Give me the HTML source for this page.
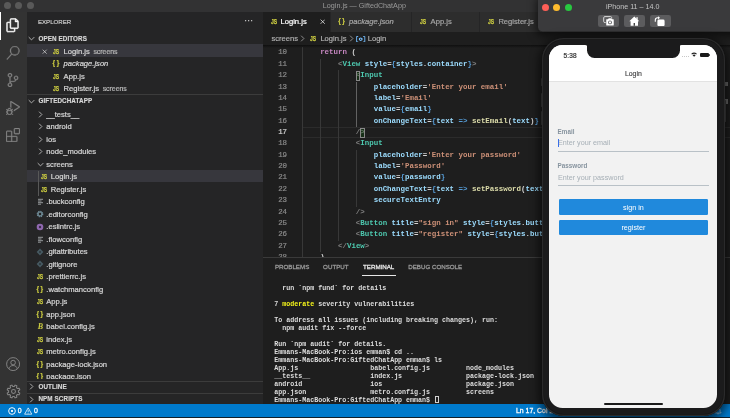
<!DOCTYPE html>
<html><head><meta charset="utf-8">
<style>
*{box-sizing:border-box;margin:0;padding:0}
html,body{width:730px;height:418px;overflow:hidden;background:#1e1e1e}
body{position:relative;font-family:"Liberation Sans",sans-serif;color:#ccc;-webkit-font-smoothing:antialiased}
.abs{position:absolute}
.t{position:absolute;white-space:pre;line-height:1}
#title{left:0;top:0;width:730px;height:12px;background:#323233}
.tl{position:absolute;top:2.3px;width:7.2px;height:7.2px;border-radius:50%;background:#595959}
#act{left:0;top:12px;width:27px;height:393px;background:#333333}
#side{left:27px;top:12px;width:236px;height:393px;background:#252526}
#status{left:0;top:404.2px;width:730px;height:12.6px;background:#007acc}
#bottom{left:0;top:416.8px;width:730px;height:1.2px;background:#10202c}
#tabs{left:263px;top:12px;width:467px;height:20px;background:#252526}
.tab{position:absolute;top:0;height:20px;background:#2d2d2d}
#ed{left:263px;top:32px;width:467px;height:225px;background:#1e1e1e}
#panel{left:263px;top:256.6px;width:467px;height:148px;background:#1e1e1e;border-top:1px solid #3a3a3a}
.row{position:absolute;left:0;width:236px;height:12.5px}
.lbl{position:absolute;top:0;font-size:7.6px;line-height:12.5px;color:#d4d4d4;white-space:pre;-webkit-text-stroke:0.22px #d4d4d4}
.hdr{position:absolute;font-size:6.3px;font-weight:bold;color:#d8d8d8;-webkit-text-stroke:0.15px #d8d8d8;line-height:12.5px;white-space:pre;letter-spacing:0.1px}
.ic{position:absolute;font-weight:bold;font-size:5.6px;line-height:12.5px;color:#cbcb41;letter-spacing:-0.3px}
.code{position:absolute;left:302.3px;font-family:"Liberation Mono",monospace;font-size:7.45px;line-height:11.37px;white-space:pre;color:#d4d4d4;font-weight:bold}
.ln{position:absolute;left:263px;width:24.1px;text-align:right;font-family:"Liberation Mono",monospace;font-size:7.45px;line-height:11.37px;color:#8a8a8a;white-space:pre;-webkit-text-stroke:0.2px #8a8a8a}
.term{position:absolute;left:274.3px;font-family:"Liberation Mono",monospace;font-size:6.66px;line-height:8px;white-space:pre;color:#dedede;font-weight:bold}
.k{color:#c586c0}.g{color:#808080}.tg{color:#4ec9b0}.at{color:#9cdcfe}.b{color:#569cd6}.s{color:#ce9178}.f{color:#dcdcaa}
</style></head><body>
<div id="wrap" style="position:absolute;left:0;top:0;width:730px;height:418px;will-change:transform;overflow:hidden">
<!-- TITLE BAR -->
<div id="title" class="abs">
 <div class="tl" style="left:3.7px"></div><div class="tl" style="left:15px"></div><div class="tl" style="left:26.5px"></div>
 <div class="t" style="left:322.8px;top:2.2px;font-size:7.2px;color:#9a9a9a">Login.js — GiftedChatApp</div>
</div>
<!-- ACTIVITY BAR -->
<div id="act" class="abs">
 <div class="abs" style="left:0;top:0;width:1.3px;height:27.5px;background:#fff"></div>
 <svg class="abs" style="left:6.2px;top:6.4px" width="13.6" height="14.6" viewBox="0 0 24 24"><path fill="#ffffff" stroke="#ffffff" stroke-width="0.9" d="M17.5 0h-9L7 1.5V6H2.500L1 7.500v15.070L2.500 24h12.070L16 22.570V18h4.700l1.300-1.430V4.500L17.500 0zm0 2.120l2.380 2.380H17.500V2.120zm-3 20.380h-12v-15H7v9.070L8.500 18h6v4.500zm6-6h-12v-15H16V6h4.500v10.500z"/></svg>
 <svg class="abs" style="left:6.4px;top:34.2px" width="13.8" height="13.8" viewBox="0 0 24 24"><path fill="#858585" stroke="#858585" stroke-width="0.5" d="M15.250 0a8.250 8.250 0 0 0-6.180 13.720L1 22.880l1.120 1 8.050-9.120A8.251 8.251 0 1 0 15.250.010V0zm0 15a6.750 6.750 0 1 1 0-13.500 6.750 6.750 0 0 1 0 13.500z"/></svg>
 <svg class="abs" style="left:6.4px;top:61.2px" width="14" height="14.2" viewBox="0 0 24 24"><path fill="#858585" stroke="#858585" stroke-width="0.5" d="M21.007 8.222A3.738 3.738 0 0 0 15.045 5.200a3.737 3.737 0 0 0 1.156 6.583 2.988 2.988 0 0 1-2.668 1.670h-2.990a4.456 4.456 0 0 0-2.989 1.165V7.400a3.737 3.737 0 1 0-1.494 0v9.117a3.776 3.776 0 1 0 1.816.099 2.990 2.990 0 0 1 2.668-1.667h2.990a4.484 4.484 0 0 0 4.223-3.039 3.736 3.736 0 0 0 3.250-3.687zM4.565 3.738a2.242 2.242 0 1 1 4.484 0 2.242 2.242 0 0 1-4.484 0zm4.484 16.441a2.242 2.242 0 1 1-4.484 0 2.242 2.242 0 0 1 4.484 0zm8.221-9.715a2.242 2.242 0 1 1 0-4.485 2.242 2.242 0 0 1 0 4.485z"/></svg>
 <svg class="abs" style="left:6.2px;top:88.5px" width="14" height="14" viewBox="0 0 24 24"><path fill="#858585" stroke="#858585" stroke-width="0.5" d="M10.940 13.500l-1.320 1.320a3.730 3.730 0 0 0-7.240 0L1.060 13.500 0 14.560l1.720 1.720-.220.220V18H0v1.500h1.500v.080c.077.489.214.966.410 1.420L0 22.940 1.060 24l1.650-1.650A4.308 4.308 0 0 0 6 24a4.310 4.310 0 0 0 3.290-1.650L10.940 24 12 22.940 10.090 21c.198-.464.336-.951.410-1.450v-.100H12V18h-1.500v-1.500l-.220-.220L12 14.560l-1.060-1.060zM6 13.500a2.250 2.250 0 0 1 2.250 2.250h-4.500A2.250 2.250 0 0 1 6 13.500zm3 6a3.330 3.330 0 0 1-3 3 3.330 3.330 0 0 1-3-3v-2.250h6v2.250zm14.760-9.900v1.260L13.500 17.370V15.600l8.500-5.370L9 2v9.460a5.070 5.070 0 0 0-1.500-.720V.630L8.640 0l15.120 9.600z"/></svg>
 <svg class="abs" style="left:6.2px;top:115.8px" width="14" height="14" viewBox="0 0 24 24"><path fill="#858585" stroke="#858585" stroke-width="0.5" d="M13.500 1.500L15 0h7.500L24 1.500V9l-1.500 1.500H15L13.500 9V1.500zm1.500 0V9h7.500V1.500H15zM0 15V6l1.500-1.500H9L10.500 6v7.500H18l1.500 1.500v7.500L18 24H1.500L0 22.500V15zm9-1.500V6H1.500v7.500H9zM9 15H1.500v7.500H9V15zm1.500 7.500H18V15h-7.500v7.500z"/></svg>
 <svg class="abs" style="left:5.9px;top:344.6px" width="14.2" height="14.2" viewBox="0 0 16 16"><circle cx="8" cy="8" r="7.3" fill="none" stroke="#858585" stroke-width="1.1"/><circle cx="8" cy="6.3" r="2.6" fill="none" stroke="#858585" stroke-width="1.1"/><path d="M3.400 13.300c.3-2.300 2.200-3.700 4.600-3.700s4.300 1.400 4.600 3.700" fill="none" stroke="#858585" stroke-width="1.100"/></svg>
 <svg class="abs" style="left:5.500px;top:371.700px" width="15" height="15" viewBox="0 0 16 16"><path d="M13.14 6.69 L14.93 7.02 L14.93 8.98 L13.14 9.31 L12.56 10.70 L13.59 12.21 L12.21 13.59 L10.70 12.56 L9.31 13.14 L8.98 14.93 L7.02 14.93 L6.69 13.14 L5.30 12.56 L3.79 13.59 L2.41 12.21 L3.44 10.70 L2.86 9.31 L1.07 8.98 L1.07 7.02 L2.86 6.69 L3.44 5.30 L2.41 3.79 L3.79 2.41 L5.30 3.44 L6.69 2.86 L7.02 1.07 L8.98 1.07 L9.31 2.86 L10.70 3.44 L12.21 2.41 L13.59 3.79 L12.56 5.30Z" fill="none" stroke="#858585" stroke-width="1.100" stroke-linejoin="round" transform="rotate(22.5 8 8)"/><circle cx="8" cy="8" r="2.100" fill="none" stroke="#858585" stroke-width="1.100"/></svg>
</div>
<!-- SIDEBAR -->
<div id="side" class="abs">
<div class="t" style="left:11px;top:7.300px;font-size:6.050px;color:#c8c8c8;letter-spacing:0.020px;-webkit-text-stroke:0.180px #c8c8c8">EXPLORER</div>
<div class="t" style="left:217.500px;top:5.200px;font-size:8px;color:#c5c5c5;letter-spacing:0.300px;font-weight:bold">···</div>
<div class="row" style="top:20.70px;"><svg class="abs" style="left:1.10px;top:3.35px" width="7" height="5" viewBox="0 0 7 5"><path d="M0.700 1.100L3.500 3.900L6.300 1.100" fill="none" stroke="#c5c5c5" stroke-width="0.850"/></svg><div class="hdr" style="left:11.400px;top:0px">OPEN EDITORS</div></div>
<div class="row" style="top:33.25px"><div class="abs" style="left:0;top:-1.200px;width:236px;height:12.700px;background:#37373d"></div><svg class="abs" style="left:15.200px;top:3.700px" width="5.400" height="5.400" viewBox="0 0 5.400 5.400"><path d="M0.700 0.700L4.700 4.700M4.700 0.700L0.700 4.700" stroke="#d0d0d0" stroke-width="0.750"/></svg><div class="ic" style="left:25.60px;top:0.70px;font-size:7.2px;letter-spacing:0;transform:scaleX(0.7);transform-origin:0 50%;-webkit-text-stroke:0.25px #cbcb41">JS</div><div class="lbl" style="left:36.600px;top:0.300px;">Login.js<span style="font-size:6.900px;color:#9a9a9a;margin-left:3.600px">screens</span></div></div>
<div class="row" style="top:45.75px"><div class="ic" style="left:25.60px;top:-0.45px;font-size:6.6px;letter-spacing:1.5px;-webkit-text-stroke:0.2px #cbcb41">{}</div><div class="lbl" style="left:36.600px;top:0.300px;font-style:italic;">package.json</div></div>
<div class="row" style="top:58.25px"><div class="ic" style="left:25.60px;top:0.70px;font-size:7.2px;letter-spacing:0;transform:scaleX(0.7);transform-origin:0 50%;-webkit-text-stroke:0.25px #cbcb41">JS</div><div class="lbl" style="left:36.600px;top:0.300px;">App.js</div></div>
<div class="row" style="top:70.75px"><div class="ic" style="left:25.60px;top:0.70px;font-size:7.2px;letter-spacing:0;transform:scaleX(0.7);transform-origin:0 50%;-webkit-text-stroke:0.25px #cbcb41">JS</div><div class="lbl" style="left:36.600px;top:0.300px;">Register.js<span style="font-size:6.900px;color:#9a9a9a;margin-left:3.600px">screens</span></div></div>
<div class="row" style="top:81.60px;border-top:1px solid #3c3c3c;"><svg class="abs" style="left:1.10px;top:4.15px" width="7" height="5" viewBox="0 0 7 5"><path d="M0.700 1.100L3.500 3.900L6.300 1.100" fill="none" stroke="#c5c5c5" stroke-width="0.850"/></svg><div class="hdr" style="left:11.400px;top:0.8px">GIFTEDCHATAPP</div></div>
<div class="abs" style="left:0;top:96px;width:236px;height:270.800px;overflow:hidden">
<div class="row" style="top:0.00px"><svg class="abs" style="left:11.00px;top:2.75px" width="5" height="7" viewBox="0 0 5 7"><path d="M1.100 0.700L3.900 3.500L1.100 6.300" fill="none" stroke="#c5c5c5" stroke-width="0.850"/></svg><div class="lbl" style="left:19.30px;top:0.500px">__tests__</div></div>
<div class="row" style="top:12.50px"><svg class="abs" style="left:11.00px;top:2.75px" width="5" height="7" viewBox="0 0 5 7"><path d="M1.100 0.700L3.900 3.500L1.100 6.300" fill="none" stroke="#c5c5c5" stroke-width="0.850"/></svg><div class="lbl" style="left:19.30px;top:0.500px">android</div></div>
<div class="row" style="top:25.00px"><svg class="abs" style="left:11.00px;top:2.75px" width="5" height="7" viewBox="0 0 5 7"><path d="M1.100 0.700L3.900 3.500L1.100 6.300" fill="none" stroke="#c5c5c5" stroke-width="0.850"/></svg><div class="lbl" style="left:19.30px;top:0.500px">ios</div></div>
<div class="row" style="top:37.50px"><svg class="abs" style="left:11.00px;top:2.75px" width="5" height="7" viewBox="0 0 5 7"><path d="M1.100 0.700L3.900 3.500L1.100 6.300" fill="none" stroke="#c5c5c5" stroke-width="0.850"/></svg><div class="lbl" style="left:19.30px;top:0.500px">node_modules</div></div>
<div class="row" style="top:50.00px"><svg class="abs" style="left:9.80px;top:3.60px" width="7" height="5" viewBox="0 0 7 5"><path d="M0.700 1.100L3.500 3.900L6.300 1.100" fill="none" stroke="#c5c5c5" stroke-width="0.850"/></svg><div class="lbl" style="left:19.30px;top:0.500px">screens</div></div>
<div class="row" style="top:62.50px"><div class="abs" style="left:0;top:-0.800px;width:236px;height:12.500px;background:#37373d"></div><div class="abs" style="left:11.100px;top:0;width:0.600px;height:12.500px;background:#585858"></div><div class="ic" style="left:14.00px;top:0.70px;font-size:7.2px;letter-spacing:0;transform:scaleX(0.7);transform-origin:0 50%;-webkit-text-stroke:0.25px #cbcb41">JS</div><div class="lbl" style="left:23.80px;top:0.500px">Login.js</div></div>
<div class="row" style="top:75.00px"><div class="abs" style="left:11.100px;top:0;width:0.600px;height:12.500px;background:#585858"></div><div class="ic" style="left:14.00px;top:0.70px;font-size:7.2px;letter-spacing:0;transform:scaleX(0.7);transform-origin:0 50%;-webkit-text-stroke:0.25px #cbcb41">JS</div><div class="lbl" style="left:23.80px;top:0.500px">Register.js</div></div>
<div class="row" style="top:87.50px"><svg class="abs" style="left:9.80px;top:2.75px" width="7" height="7" viewBox="0 0 7 7"><path d="M1 1.300h5M1 3h3.500M1 4.700h5M1 6.200h3" stroke="#a0a5a8" stroke-width="0.9" fill="none"/></svg><div class="lbl" style="left:19.30px;top:0.500px">.buckconfig</div></div>
<div class="row" style="top:100.00px"><svg class="abs" style="left:9.30px;top:2.25px" width="8" height="8" viewBox="0 0 8 8"><circle cx="4" cy="4" r="2.500" fill="none" stroke="#6f8b97" stroke-width="1.700" stroke-dasharray="1.200 0.760"/><circle cx="4" cy="4" r="2" fill="none" stroke="#6f8b97" stroke-width="1.200"/></svg><div class="lbl" style="left:19.30px;top:0.500px">.editorconfig</div></div>
<div class="row" style="top:112.50px"><svg class="abs" style="left:9.30px;top:2.25px" width="8" height="8" viewBox="0 0 8 8"><circle cx="4" cy="4" r="3.300" fill="#9068b0"/><circle cx="4" cy="4" r="1.200" fill="#3a2d4a"/></svg><div class="lbl" style="left:19.30px;top:0.500px">.eslintrc.js</div></div>
<div class="row" style="top:125.00px"><svg class="abs" style="left:9.80px;top:2.75px" width="7" height="7" viewBox="0 0 7 7"><path d="M1 1.300h5M1 3h3.500M1 4.700h5M1 6.200h3" stroke="#a0a5a8" stroke-width="0.9" fill="none"/></svg><div class="lbl" style="left:19.30px;top:0.500px">.flowconfig</div></div>
<div class="row" style="top:137.50px"><svg class="abs" style="left:9.30px;top:2.25px" width="8" height="8" viewBox="0 0 8 8"><path d="M4 0.600L7.400 4L4 7.400L0.600 4Z" fill="#465961"/><circle cx="4" cy="4" r="0.9" fill="#2a3237"/></svg><div class="lbl" style="left:19.30px;top:0.500px">.gitattributes</div></div>
<div class="row" style="top:150.00px"><svg class="abs" style="left:9.30px;top:2.25px" width="8" height="8" viewBox="0 0 8 8"><path d="M4 0.600L7.400 4L4 7.400L0.600 4Z" fill="#465961"/><circle cx="4" cy="4" r="0.9" fill="#2a3237"/></svg><div class="lbl" style="left:19.30px;top:0.500px">.gitignore</div></div>
<div class="row" style="top:162.50px"><div class="ic" style="left:9.50px;top:0.70px;font-size:7.2px;letter-spacing:0;transform:scaleX(0.7);transform-origin:0 50%;-webkit-text-stroke:0.25px #cbcb41">JS</div><div class="lbl" style="left:19.30px;top:0.500px">.prettierrc.js</div></div>
<div class="row" style="top:175.00px"><div class="ic" style="left:9.50px;top:-0.45px;font-size:6.6px;letter-spacing:1.5px;-webkit-text-stroke:0.2px #cbcb41">{}</div><div class="lbl" style="left:19.30px;top:0.500px">.watchmanconfig</div></div>
<div class="row" style="top:187.50px"><div class="ic" style="left:9.50px;top:0.70px;font-size:7.2px;letter-spacing:0;transform:scaleX(0.7);transform-origin:0 50%;-webkit-text-stroke:0.25px #cbcb41">JS</div><div class="lbl" style="left:19.30px;top:0.500px">App.js</div></div>
<div class="row" style="top:200.00px"><div class="ic" style="left:9.50px;top:-0.45px;font-size:6.6px;letter-spacing:1.5px;-webkit-text-stroke:0.2px #cbcb41">{}</div><div class="lbl" style="left:19.30px;top:0.500px">app.json</div></div>
<div class="row" style="top:212.50px"><div class="ic" style="left:10.70px;top:0.00px;font-size:8px;font-style:italic;font-weight:bold;font-family:'Liberation Serif',serif;letter-spacing:0">B</div><div class="lbl" style="left:19.30px;top:0.500px">babel.config.js</div></div>
<div class="row" style="top:225.00px"><div class="ic" style="left:9.50px;top:0.70px;font-size:7.2px;letter-spacing:0;transform:scaleX(0.7);transform-origin:0 50%;-webkit-text-stroke:0.25px #cbcb41">JS</div><div class="lbl" style="left:19.30px;top:0.500px">index.js</div></div>
<div class="row" style="top:237.50px"><div class="ic" style="left:9.50px;top:0.70px;font-size:7.2px;letter-spacing:0;transform:scaleX(0.7);transform-origin:0 50%;-webkit-text-stroke:0.25px #cbcb41">JS</div><div class="lbl" style="left:19.30px;top:0.500px">metro.config.js</div></div>
<div class="row" style="top:250.00px"><div class="ic" style="left:9.50px;top:-0.45px;font-size:6.6px;letter-spacing:1.5px;-webkit-text-stroke:0.2px #cbcb41">{}</div><div class="lbl" style="left:19.30px;top:0.500px">package-lock.json</div></div>
<div class="row" style="top:262.50px"><div class="ic" style="left:9.50px;top:-0.45px;font-size:6.6px;letter-spacing:1.5px;-webkit-text-stroke:0.2px #cbcb41">{}</div><div class="lbl" style="left:19.30px;top:0.500px">package.json</div></div>
</div>
<div class="row" style="top:369px;border-top:1px solid #3c3c3c;background:#252526"><svg class="abs" style="left:2.40px;top:1.10px" width="5" height="7" viewBox="0 0 5 7"><path d="M1.100 0.700L3.900 3.500L1.100 6.300" fill="none" stroke="#c5c5c5" stroke-width="0.850"/></svg><div class="hdr" style="left:11.400px;top:-1.500px">OUTLINE</div></div>
<div class="row" style="top:381.200px;border-top:1px solid #3c3c3c;background:#252526;height:12.700px"><svg class="abs" style="left:2.40px;top:1.40px" width="5" height="7" viewBox="0 0 5 7"><path d="M1.100 0.700L3.900 3.500L1.100 6.300" fill="none" stroke="#c5c5c5" stroke-width="0.850"/></svg><div class="hdr" style="left:11.400px;top:-1.300px">NPM SCRIPTS</div></div>
</div>
<!-- TABS -->
<div id="tabs" class="abs">
<div class="tab" style="left:0px;width:67.7px;background:#1e1e1e;border-right:0.600px solid #252526"><div class="ic" style="left:7.50px;top:4.35px;font-size:7.2px;letter-spacing:0;transform:scaleX(0.7);transform-origin:0 50%;-webkit-text-stroke:0.25px #cbcb41">JS</div><div class="t" style="left:17.50px;top:6.00px;font-size:7.600px;color:#ffffff;-webkit-text-stroke:0.200px #ffffff">Login.js</div><svg class="abs" style="left:56.80px;top:7.20px" width="5.400" height="5.400" viewBox="0 0 5.400 5.400"><path d="M0.600 0.600L4.800 4.800M4.800 0.600L0.600 4.800" stroke="#e0e0e0" stroke-width="0.800"/></svg></div>
<div class="tab" style="left:67.7px;width:81.6px;background:#2d2d2d;border-right:0.600px solid #252526"><div class="ic" style="left:7.50px;top:3.20px;font-size:6.6px;letter-spacing:1.5px;-webkit-text-stroke:0.2px #cbcb41">{}</div><div class="t" style="left:18.30px;top:6.00px;font-size:7.600px;color:#a6a6a6;font-style:italic;-webkit-text-stroke:0.200px #a6a6a6">package.json</div></div>
<div class="tab" style="left:149.3px;width:67.9px;background:#2d2d2d;border-right:0.600px solid #252526"><div class="ic" style="left:7.60px;top:4.35px;font-size:7.2px;letter-spacing:0;transform:scaleX(0.7);transform-origin:0 50%;-webkit-text-stroke:0.25px #cbcb41">JS</div><div class="t" style="left:18.30px;top:6.00px;font-size:7.600px;color:#a6a6a6;-webkit-text-stroke:0.200px #a6a6a6">App.js</div></div>
<div class="tab" style="left:217.2px;width:75px;background:#2d2d2d;border-right:0.600px solid #252526"><div class="ic" style="left:8.10px;top:4.35px;font-size:7.2px;letter-spacing:0;transform:scaleX(0.7);transform-origin:0 50%;-webkit-text-stroke:0.25px #cbcb41">JS</div><div class="t" style="left:18.20px;top:6.00px;font-size:7.600px;color:#a6a6a6;-webkit-text-stroke:0.200px #a6a6a6">Register.js</div></div>
</div>
<!-- EDITOR -->
<div id="ed" class="abs" style="overflow:hidden">
<div class="t" style="left:8.500px;top:2.90px;font-size:7.600px;color:#b4b4b4;-webkit-text-stroke:0.150px #b4b4b4">screens</div>
<svg class="abs" style="left:37.10px;top:2.80px" width="5" height="7" viewBox="0 0 5 7"><path d="M1.100 0.700L3.900 3.500L1.100 6.300" fill="none" stroke="#a0a0a0" stroke-width="0.850"/></svg>
<div class="ic" style="left:46.50px;top:1.25px;font-size:7.2px;letter-spacing:0;transform:scaleX(0.7);transform-origin:0 50%;-webkit-text-stroke:0.25px #cbcb41">JS</div>
<div class="t" style="left:57.400px;top:2.90px;font-size:7.600px;color:#b4b4b4;-webkit-text-stroke:0.150px #b4b4b4">Login.js</div>
<svg class="abs" style="left:85.90px;top:2.80px" width="5" height="7" viewBox="0 0 5 7"><path d="M1.100 0.700L3.900 3.500L1.100 6.300" fill="none" stroke="#a0a0a0" stroke-width="0.850"/></svg>
<svg class="abs" style="left:93.300px;top:3.60px" width="9.400" height="6.400" viewBox="0 0 9.400 6.400"><path d="M2.200 0.500H0.600V5.900H2.200M7.200 0.500H8.800V5.900H7.200" fill="none" stroke="#75beff" stroke-width="0.900"/><path d="M4.700 1.400L6.500 2.300V4.100L4.700 5L2.900 4.100V2.300Z" fill="#75beff"/><circle cx="4.700" cy="3.200" r="0.700" fill="#1e1e1e"/></svg>
<div class="t" style="left:104.700px;top:2.90px;font-size:7.600px;color:#b4b4b4;-webkit-text-stroke:0.150px #b4b4b4">Login</div>
</div>
<div id="code" class="abs" style="left:0;top:44.500px;width:730px;height:212.500px;overflow:hidden">
<div class="abs" style="left:302.300px;top:82.50px;width:430px;height:11.37px;border-top:1px solid #2b2b2b;border-bottom:1px solid #2b2b2b"></div>
<div class="abs" style="left:302.30px;top:2.91px;width:0.600px;height:216.03px;background:#383838"></div>
<div class="abs" style="left:320.18px;top:14.28px;width:0.600px;height:193.29px;background:#383838"></div>
<div class="abs" style="left:338.06px;top:25.66px;width:0.600px;height:170.55px;background:#383838"></div>
<div class="abs" style="left:355.94px;top:37.03px;width:0.600px;height:45.48px;background:#626262"></div>
<div class="abs" style="left:355.94px;top:105.25px;width:0.600px;height:56.85px;background:#383838"></div>
<div class="ln" style="top:2.91px;">10</div>
<div class="code" style="top:2.91px">    <span class="k">return</span> (</div>
<div class="ln" style="top:14.28px;">11</div>
<div class="code" style="top:14.28px">        <span class="g">&lt;</span><span class="tg">View</span> <span class="at">style</span>=<span class="b">{</span><span class="at">styles</span>.<span class="at">container</span><span class="b">}</span><span class="g">&gt;</span></div>
<div class="ln" style="top:25.66px;">12</div>
<div class="code" style="top:25.66px">            <span class="g">&lt;</span><span class="tg">Input</span></div>
<div class="ln" style="top:37.03px;">13</div>
<div class="code" style="top:37.03px">                <span class="at">placeholder</span>=<span class="s">'Enter your email'</span></div>
<div class="ln" style="top:48.39px;">14</div>
<div class="code" style="top:48.39px">                <span class="at">label</span>=<span class="s">'Email'</span></div>
<div class="ln" style="top:59.76px;">15</div>
<div class="code" style="top:59.76px">                <span class="at">value</span>=<span class="b">{</span><span class="at">email</span><span class="b">}</span></div>
<div class="ln" style="top:71.13px;">16</div>
<div class="code" style="top:71.13px">                <span class="at">onChangeText</span>=<span class="b">{</span><span class="at">text</span> <span class="b">=&gt;</span> <span class="f">setEmail</span>(<span class="at">text</span>)<span class="b">}</span></div>
<div class="ln" style="top:82.50px;color:#c6c6c6;font-weight:bold;">17</div>
<div class="code" style="top:82.50px">            <span class="g">/&gt;</span></div>
<div class="ln" style="top:93.88px;">18</div>
<div class="code" style="top:93.88px">            <span class="g">&lt;</span><span class="tg">Input</span></div>
<div class="ln" style="top:105.25px;">19</div>
<div class="code" style="top:105.25px">                <span class="at">placeholder</span>=<span class="s">'Enter your password'</span></div>
<div class="ln" style="top:116.61px;">20</div>
<div class="code" style="top:116.61px">                <span class="at">label</span>=<span class="s">'Password'</span></div>
<div class="ln" style="top:127.98px;">21</div>
<div class="code" style="top:127.98px">                <span class="at">value</span>=<span class="b">{</span><span class="at">password</span><span class="b">}</span></div>
<div class="ln" style="top:139.35px;">22</div>
<div class="code" style="top:139.35px">                <span class="at">onChangeText</span>=<span class="b">{</span><span class="at">text</span> <span class="b">=&gt;</span> <span class="f">setPassword</span>(<span class="at">text</span>)<span class="b">}</span></div>
<div class="ln" style="top:150.72px;">23</div>
<div class="code" style="top:150.72px">                <span class="at">secureTextEntry</span></div>
<div class="ln" style="top:162.09px;">24</div>
<div class="code" style="top:162.09px">            <span class="g">/&gt;</span></div>
<div class="ln" style="top:173.46px;">25</div>
<div class="code" style="top:173.46px">            <span class="g">&lt;</span><span class="tg">Button</span> <span class="at">title</span>=<span class="s">"sign in"</span> <span class="at">style</span>=<span class="b">{</span><span class="at">styles</span>.<span class="at">button</span><span class="b">}</span> <span class="g">/&gt;</span></div>
<div class="ln" style="top:184.83px;">26</div>
<div class="code" style="top:184.83px">            <span class="g">&lt;</span><span class="tg">Button</span> <span class="at">title</span>=<span class="s">"register"</span> <span class="at">style</span>=<span class="b">{</span><span class="at">styles</span>.<span class="at">button</span><span class="b">}</span> <span class="g">/&gt;</span></div>
<div class="ln" style="top:196.20px;">27</div>
<div class="code" style="top:196.20px">        <span class="g">&lt;/</span><span class="tg">View</span><span class="g">&gt;</span></div>
<div class="ln" style="top:207.57px;">28</div>
<div class="code" style="top:207.57px">    )</div>
<div class="abs" style="left:355.64px;top:26.86px;width:4.87px;height:9.37px;border:0.600px solid #888;background:rgba(0,110,0,0.220)"></div>
<div class="abs" style="left:360.11px;top:83.70px;width:4.87px;height:9.37px;border:0.600px solid #888;background:rgba(0,110,0,0.220)"></div>
<div class="abs" style="left:263px;top:0;width:467px;height:3.600px;background:linear-gradient(rgba(0,0,0,0.500),rgba(0,0,0,0))"></div>
</div>
<!-- PANEL -->
<div id="panel" class="abs" style="overflow:hidden">
<div class="t" style="left:11.90px;top:6.30px;font-size:6.200px;color:#999999;-webkit-text-stroke:0.280px #999999">PROBLEMS</div>
<div class="t" style="left:60.10px;top:6.30px;font-size:6.200px;color:#999999;-webkit-text-stroke:0.280px #999999">OUTPUT</div>
<div class="t" style="left:100.00px;top:6.30px;font-size:6.200px;color:#e7e7e7;-webkit-text-stroke:0.280px #e7e7e7">TERMINAL</div>
<div class="t" style="left:145.20px;top:6.30px;font-size:6.200px;color:#999999;-webkit-text-stroke:0.280px #999999">DEBUG CONSOLE</div>
<div class="abs" style="left:99px;top:17.200px;width:33.500px;height:1.300px;background:#e7e7e7"></div>
</div>
<div id="term" class="abs" style="left:0;top:280px;width:730px;height:125px;overflow:hidden">
<div class="term" style="top:4.00px">  run `npm fund` for details</div>
<div class="term" style="top:12.00px"></div>
<div class="term" style="top:20.00px">7 <span style="color:#f4f41a">moderate</span> severity vulnerabilities</div>
<div class="term" style="top:28.00px"></div>
<div class="term" style="top:36.00px">To address all issues (including breaking changes), run:</div>
<div class="term" style="top:44.00px">  npm audit fix --force</div>
<div class="term" style="top:52.00px"></div>
<div class="term" style="top:60.00px">Run `npm audit` for details.</div>
<div class="term" style="top:68.00px">Emmans-MacBook-Pro:ios emman$ cd ..</div>
<div class="term" style="top:76.00px">Emmans-MacBook-Pro:GiftedChatApp emman$ ls</div>
<div class="term" style="top:84.00px">App.js                  babel.config.js         node_modules</div>
<div class="term" style="top:92.00px">__tests__               index.js                package-lock.json</div>
<div class="term" style="top:100.00px">android                 ios                     package.json</div>
<div class="term" style="top:108.00px">app.json                metro.config.js         screens</div>
<div class="term" style="top:116.00px">Emmans-MacBook-Pro:GiftedChatApp emman$ </div>
<div class="abs" style="left:434.60px;top:115.80px;width:4.200px;height:7.400px;border:0.600px solid #d0d0d0"></div>
</div>
<!-- STATUS -->
<div id="status" class="abs">
<svg class="abs" style="left:7.800px;top:2.700px" width="8" height="8" viewBox="0 0 8 8"><circle cx="4" cy="4" r="3.350" fill="none" stroke="#fff" stroke-width="0.950"/><path d="M3 3L5 5M5 3L3 5" stroke="#fff" stroke-width="0.900"/></svg>
<div class="t" style="left:17.700px;top:3.900px;font-size:6.900px;color:#fff;-webkit-text-stroke:0.280px #fff">0</div>
<svg class="abs" style="left:23.800px;top:2.700px" width="8.400" height="8" viewBox="0 0 8.400 8"><path d="M4.200 0.900L7.800 7.200H0.600Z" fill="none" stroke="#fff" stroke-width="0.750" stroke-linejoin="round"/><path d="M4.200 3.100V5.200M4.200 5.800V6.500" stroke="#fff" stroke-width="0.700"/></svg>
<div class="t" style="left:34px;top:3.900px;font-size:6.900px;color:#fff;-webkit-text-stroke:0.280px #fff">0</div>
<div class="t" style="left:516px;top:3.900px;font-size:6.900px;color:#fff;-webkit-text-stroke:0.280px #fff">Ln 17, Col 15    Spaces: 4    UTF-8    LF    JavaScript</div>
<svg class="abs" style="left:713.500px;top:2.800px" width="8" height="8" viewBox="0 0 8 8"><path d="M1.200 6V5.400L1.900 4.600V3.200Q1.900 1.200 4 1.200Q6.100 1.200 6.100 3.200V4.600L6.800 5.400V6Z" fill="none" stroke="#d0e4f5" stroke-width="0.700"/><path d="M3.300 6.800H4.700" stroke="#d0e4f5" stroke-width="0.700"/></svg>
</div>
<div id="bottom" class="abs"></div>
<!-- SIMULATOR -->
<div id="sim" class="abs" style="left:0;top:0;width:730px;height:418px;overflow:hidden;pointer-events:none">
<div class="abs" style="left:537.700px;top:-4px;width:200px;height:35.800px;background:#3a3a3c;border-radius:4.500px;box-shadow:0 2px 8px 2px rgba(0,0,0,0.550), inset 0 -0.600px 0 #222">
<div class="abs" style="left:4.40px;top:7.60px;width:7px;height:7px;border-radius:50%;background:#fe5f57"></div>
<div class="abs" style="left:15.60px;top:7.60px;width:7px;height:7px;border-radius:50%;background:#febc2e"></div>
<div class="abs" style="left:27.40px;top:7.60px;width:7px;height:7px;border-radius:50%;background:#28c840"></div>
<div class="t" style="left:68px;top:8.400px;width:54px;text-align:center;font-size:7.150px;color:#c4c4c4">iPhone 11 – 14.0</div>
<div class="abs" style="left:60.80px;top:18.800px;width:20.70px;height:12.600px;border-radius:2.300px;background:#5c5c5e"></div>
<div class="abs" style="left:86.50px;top:18.800px;width:20.70px;height:12.600px;border-radius:2.300px;background:#5c5c5e"></div>
<div class="abs" style="left:112.10px;top:18.800px;width:21.00px;height:12.600px;border-radius:2.300px;background:#5c5c5e"></div>
<svg class="abs" style="left:65.400px;top:20px" width="11.400" height="10.400" viewBox="0 0 11.400 10.400"><rect x="0.700" y="0.600" width="8" height="6" rx="1.200" fill="none" stroke="#e8e8e8" stroke-width="0.900"/><path d="M3 3.800Q3 3 3.800 3H5l0.700-0.900h2.800L9.200 3h1Q11 3 11 3.800V9Q11 9.800 10.200 9.800H3.800Q3 9.800 3 9Z" fill="#fff" stroke="#5c5c5e" stroke-width="0.500"/><circle cx="7" cy="6.400" r="1.900" fill="#5c5c5e"/><circle cx="7" cy="6.400" r="1.100" fill="#fff"/></svg>
<svg class="abs" style="left:91.600px;top:20px" width="10.600" height="10.200" viewBox="0 0 10.600 10.200"><path d="M5.300 0.500L10.300 5.300H9V9.800H1.600V5.300H0.300Z" fill="#fff"/><rect x="7.400" y="1.200" width="1.300" height="2.600" fill="#fff"/><rect x="4.600" y="7" width="1.400" height="2.800" fill="#444"/></svg>
<svg class="abs" style="left:116.200px;top:19.800px" width="11" height="10.600" viewBox="0 0 11 10.600"><rect x="3.400" y="3.600" width="7.200" height="6.600" rx="1.500" fill="#fff"/><path d="M1.300 5.800V4Q1.300 1.800 3.600 1.800H4.400" fill="none" stroke="#fff" stroke-width="1.100"/><path d="M4 0.200L6 1.800L4 3.400Z" fill="#fff"/></svg>
</div>
<div class="abs" style="left:725px;top:81.500px;width:3.400px;height:4.500px;background:#6a6a6a"></div>
<div class="abs" style="left:725px;top:99px;width:3.400px;height:4.500px;background:#6a6a6a"></div>
<div class="abs" style="left:541.6px;top:37.5px;width:183.60px;height:378.10px;border-radius:21.500px;background:#1b1b1c;box-shadow:0 3px 10px 3px rgba(0,0,0,0.600), inset 0 0 0 1.300px #2a2a2b, inset 0 0 0 2px #161616"></div>
<div class="abs" style="left:540.7px;top:78px;width:1.200px;height:8px;background:#262626;border-radius:0.500px"></div>
<div class="abs" style="left:540.7px;top:93px;width:1.200px;height:14px;background:#262626;border-radius:0.500px"></div>
<div class="abs" style="left:540.7px;top:111px;width:1.200px;height:14px;background:#262626;border-radius:0.500px"></div>
<div class="abs" style="left:724.9000000000001px;top:100px;width:1.200px;height:22px;background:#262626;border-radius:0.500px"></div>
<div id="scr" class="abs" style="left:549.4px;top:44.7px;width:167.90px;height:363.00px;border-radius:13.500px;background:#f2f2f2;overflow:hidden">
<div class="abs" style="left:0;top:0;width:167.90px;height:37.700px;background:#ffffff;border-bottom:0.500px solid #e2e2e2"></div>
<div class="abs" style="left:37.90px;top:-8px;width:92.30px;height:21.10px;background:#1b1b1c;border-radius:0 0 7.500px 7.500px"></div>
<svg class="abs" style="left:35.40px;top:0" width="2.600" height="2.600" viewBox="0 0 2.600 2.600"><path d="M0 0H2.600V2.600Q2.600 0 0 0Z" fill="#1b1b1c"/></svg>
<svg class="abs" style="left:130.10px;top:0" width="2.600" height="2.600" viewBox="0 0 2.600 2.600"><path d="M2.600 0H0V2.600Q0 0 2.600 0Z" fill="#1b1b1c"/></svg>
<div class="t" style="left:14.20px;top:7.90px;font-size:6.500px;color:#333;-webkit-text-stroke:0.220px #333;letter-spacing:0.150px">5:38</div>
<div class="abs" style="left:132.30px;top:11.50px;width:7.200px;height:0.900px;background:repeating-linear-gradient(90deg,#c8c8c8 0 1px,transparent 1px 2.050px)"></div>
<svg class="abs" style="left:141.70px;top:7.70px" width="6.200" height="5.200" viewBox="0 0 6.400 5"><path d="M0.300 1.700Q3.200 -0.800 6.100 1.700L5.400 2.500Q3.200 0.700 1 2.500Z" fill="#222"/><path d="M1.600 3.100Q3.200 1.800 4.800 3.100L3.200 4.800Z" fill="#222"/></svg>
<div class="abs" style="left:150.60px;top:8.60px;width:8.600px;height:4px;border-radius:1.100px;background:#1a1a1a"></div>
<div class="abs" style="left:159.50px;top:9.80px;width:0.700px;height:1.600px;background:#555;border-radius:0 0.500px 0.500px 0"></div>
<div class="t" style="left:0;top:25.90px;width:167.90px;text-align:center;font-size:6.900px;color:#3a3a3c;-webkit-text-stroke:0.120px #3a3a3c">Login</div>
<div class="t" style="left:8.20px;top:84.35px;font-size:6.3px;color:#86939e;font-weight:bold;">Email</div>
<div class="t" style="left:8.50px;top:94.80px;font-size:7.2px;color:#a6afb6;">Enter your email</div>
<div class="abs" style="left:8.30px;top:93.90px;width:0.800px;height:8.800px;background:#3a6fe8"></div>
<div class="abs" style="left:8.20px;top:106.20px;width:151.00px;height:0.700px;background:#b9c1c7"></div>
<div class="t" style="left:8.20px;top:117.95px;font-size:6.3px;color:#86939e;font-weight:bold;">Password</div>
<div class="t" style="left:8.50px;top:128.90px;font-size:7.2px;color:#a6afb6;">Enter your password</div>
<div class="abs" style="left:8.20px;top:139.90px;width:151.00px;height:0.700px;background:#b9c1c7"></div>
<div class="abs" style="left:9.40px;top:154.50px;width:149.20px;height:15.90px;background:#2089dc;border-radius:1.200px;color:#fff;font-size:7.200px;line-height:17.10px;text-align:center">sign in</div>
<div class="abs" style="left:9.40px;top:174.90px;width:149.20px;height:15.60px;background:#2089dc;border-radius:1.200px;color:#fff;font-size:7.200px;line-height:15.60px;text-align:center">register</div>
<div class="abs" style="left:54.60px;top:358.30px;width:59.40px;height:1.900px;border-radius:1px;background:#1a1a1a"></div>
</div>
</div>
</body></html>
